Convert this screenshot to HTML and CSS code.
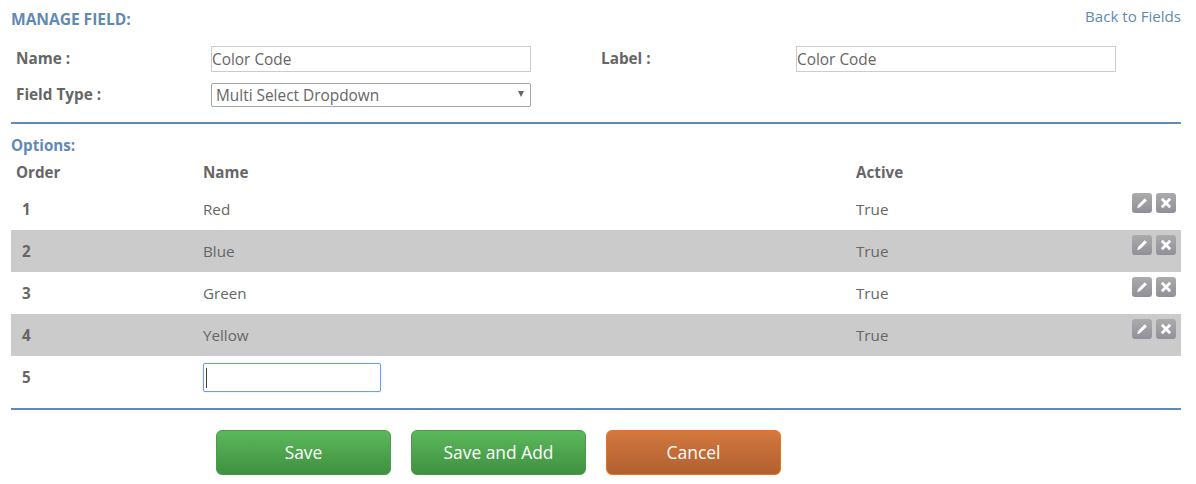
FILE: index.html
```html
<!DOCTYPE html>
<html lang="en">
<head>
<meta charset="utf-8">
<title>Manage Field</title>
<link rel="stylesheet" href="styles.css">
</head>
<body>
<main class="page">
  <header class="top">
    <h1 class="title">MANAGE FIELD:</h1>
    <a class="back" href="#">Back to Fields</a>
  </header>
  <section class="fields">
    <label class="lbl">Name :</label>
    <input class="txt" type="text" value="Color Code">
    <label class="lbl lbl2">Label :</label>
    <input class="txt" type="text" value="Color Code">
    <label class="lbl lbl-type">Field Type :</label>
    <div class="sel"><span>Multi Select Dropdown</span><i class="caret"></i></div>
  </section>
  <hr class="rule">
  <h2 class="sub">Options:</h2>
  <div class="row head">
    <div class="order">Order</div><div>Name</div><div>Active</div><div></div>
  </div>
  <div class="row">
    <div class="order num">1</div><div>Red</div><div>True</div>
    <div class="acts">
      <span class="ic"><svg viewBox="0 0 20 20"><path d="M5.2 15.2l.9-3.2 6.7-6.7 2.1 2.1-6.7 6.7z"/></svg></span>
      <span class="ic"><svg viewBox="0 0 20 20"><path d="M5.8 5.8l8.4 8.4M14.2 5.8l-8.4 8.4"/></svg></span>
    </div>
  </div>
  <div class="row alt">
    <div class="order num">2</div><div>Blue</div><div>True</div>
    <div class="acts">
      <span class="ic"><svg viewBox="0 0 20 20"><path d="M5.2 15.2l.9-3.2 6.7-6.7 2.1 2.1-6.7 6.7z"/></svg></span>
      <span class="ic"><svg viewBox="0 0 20 20"><path d="M5.8 5.8l8.4 8.4M14.2 5.8l-8.4 8.4"/></svg></span>
    </div>
  </div>
  <div class="row">
    <div class="order num">3</div><div>Green</div><div>True</div>
    <div class="acts">
      <span class="ic"><svg viewBox="0 0 20 20"><path d="M5.2 15.2l.9-3.2 6.7-6.7 2.1 2.1-6.7 6.7z"/></svg></span>
      <span class="ic"><svg viewBox="0 0 20 20"><path d="M5.8 5.8l8.4 8.4M14.2 5.8l-8.4 8.4"/></svg></span>
    </div>
  </div>
  <div class="row alt">
    <div class="order num">4</div><div>Yellow</div><div>True</div>
    <div class="acts">
      <span class="ic"><svg viewBox="0 0 20 20"><path d="M5.2 15.2l.9-3.2 6.7-6.7 2.1 2.1-6.7 6.7z"/></svg></span>
      <span class="ic"><svg viewBox="0 0 20 20"><path d="M5.8 5.8l8.4 8.4M14.2 5.8l-8.4 8.4"/></svg></span>
    </div>
  </div>
  <div class="row">
    <div class="order num">5</div>
    <div><div class="focus"><i class="cursor"></i></div></div>
  </div>
  <hr class="rule rule2">
  <div class="btns">
    <button class="btn green" type="button">Save</button>
    <button class="btn green" type="button">Save and Add</button>
    <button class="btn orange" type="button">Cancel</button>
  </div>
</main>
</body>
</html>
```
FILE: styles.css
```css
* { box-sizing: border-box; }
html, body { margin: 0; background: #fff; }
body {
  font-family: "Open Sans", "Liberation Sans", sans-serif;
  font-size: 15px;
  color: #666;
  height: 484px;
  overflow: hidden;
}
.page { padding: 0 15px 0 11px; }
.top { display: flex; justify-content: space-between; height: 46px; }
.title { margin: 10px 0 0; font-size: 15.6px; line-height: 18px; font-weight: 700; color: #5f8ab4; letter-spacing: -.05px; }
.back { margin-top: 7px; line-height: 18px; font-size: 15.1px; color: #5f8ab4; text-decoration: none; }
.fields {
  display: grid;
  grid-template-columns: 200px 320px 70px 195px 320px;
  grid-template-rows: 26px 24px;
  row-gap: 11px;
  justify-content: start;
  align-items: start;
}
.lbl { padding-left: 5px; font-weight: 700; line-height: 24px; color: #666; font-size: 15.3px; white-space: nowrap; }
.fields .lbl2 { grid-column: 3 / 5; padding-left: 70px; }
.fields .lbl-type { grid-column: 1; line-height: 22px; }
.txt {
  width: 320px; height: 26px; margin: 0; padding: 1px 0 0 0;
  border: 1px solid #ccc; border-radius: 0; outline: 0;
  font: 15.4px/20px "Open Sans", "Liberation Sans", sans-serif;
  color: #666; background: #fff;
}
.sel {
  grid-column: 2;
  position: relative;
  width: 320px; height: 24px; padding-left: 4px;
  border: 1px solid #a6a6a6; border-radius: 2px;
  line-height: 23px; font-size: 15.4px; color: #666;
}
.caret {
  position: absolute; right: 6px; top: 7px;
  border: 3.5px solid transparent; border-top: 6px solid #666; border-bottom: 0;
}
.rule { margin: 15px 0 0; border: 0; height: 2px; background: #5f8ab4; }
.sub { margin: 12px 0 0; font-size: 15.2px; line-height: 18px; font-weight: 700; color: #5f8ab4; }
.row {
  display: grid;
  grid-template-columns: 192px 653px 276px 49px;
  height: 42px;
  align-items: center;
  font-size: 15.2px;
}
.row.head { height: 25px; margin-top: 9px; font-weight: 700; align-items: start; line-height: 18px; font-size: 15.2px; }
.row.alt { background: #cbcbcb; }
.order { padding-left: 5px; }
.num { padding-left: 11px; font-weight: 700; }
.acts { display: flex; gap: 4px; align-self: start; margin-top: 5px; }
.ic {
  width: 20px; height: 20px; border-radius: 3px;
  background: linear-gradient(#ababab, #90909a);
  display: block;
}
.ic svg { display: block; width: 20px; height: 20px; }
.ic path { fill: #fff; }
.ic:nth-child(2) path { fill: none; stroke: #fff; stroke-width: 2.8; }
.focus {
  position: relative;
  width: 178px; height: 29px;
  border: 1px solid #6f9fe8; border-radius: 2px;
  box-shadow: 0 0 1px #6f9fe8;
}
.cursor { position: absolute; left: 2px; top: 4px; width: 1px; height: 20px; background: #444; }
.rule2 { margin-top: 10px; }
.btns { display: flex; gap: 20px; margin: 20px 0 0 205px; }
.btn {
  width: 175px; height: 45px; margin: 0; padding: 0 0 2px;
  border-radius: 6px; color: #fff;
  font: 17.4px "Open Sans", "Liberation Sans", sans-serif;
}
.green { background: linear-gradient(#5cb85c, #3f913f); border: 1px solid #4a9a4a; }
.orange { background: linear-gradient(#d2783f, #b25f30); border: 1px solid #f96f10; }
```
